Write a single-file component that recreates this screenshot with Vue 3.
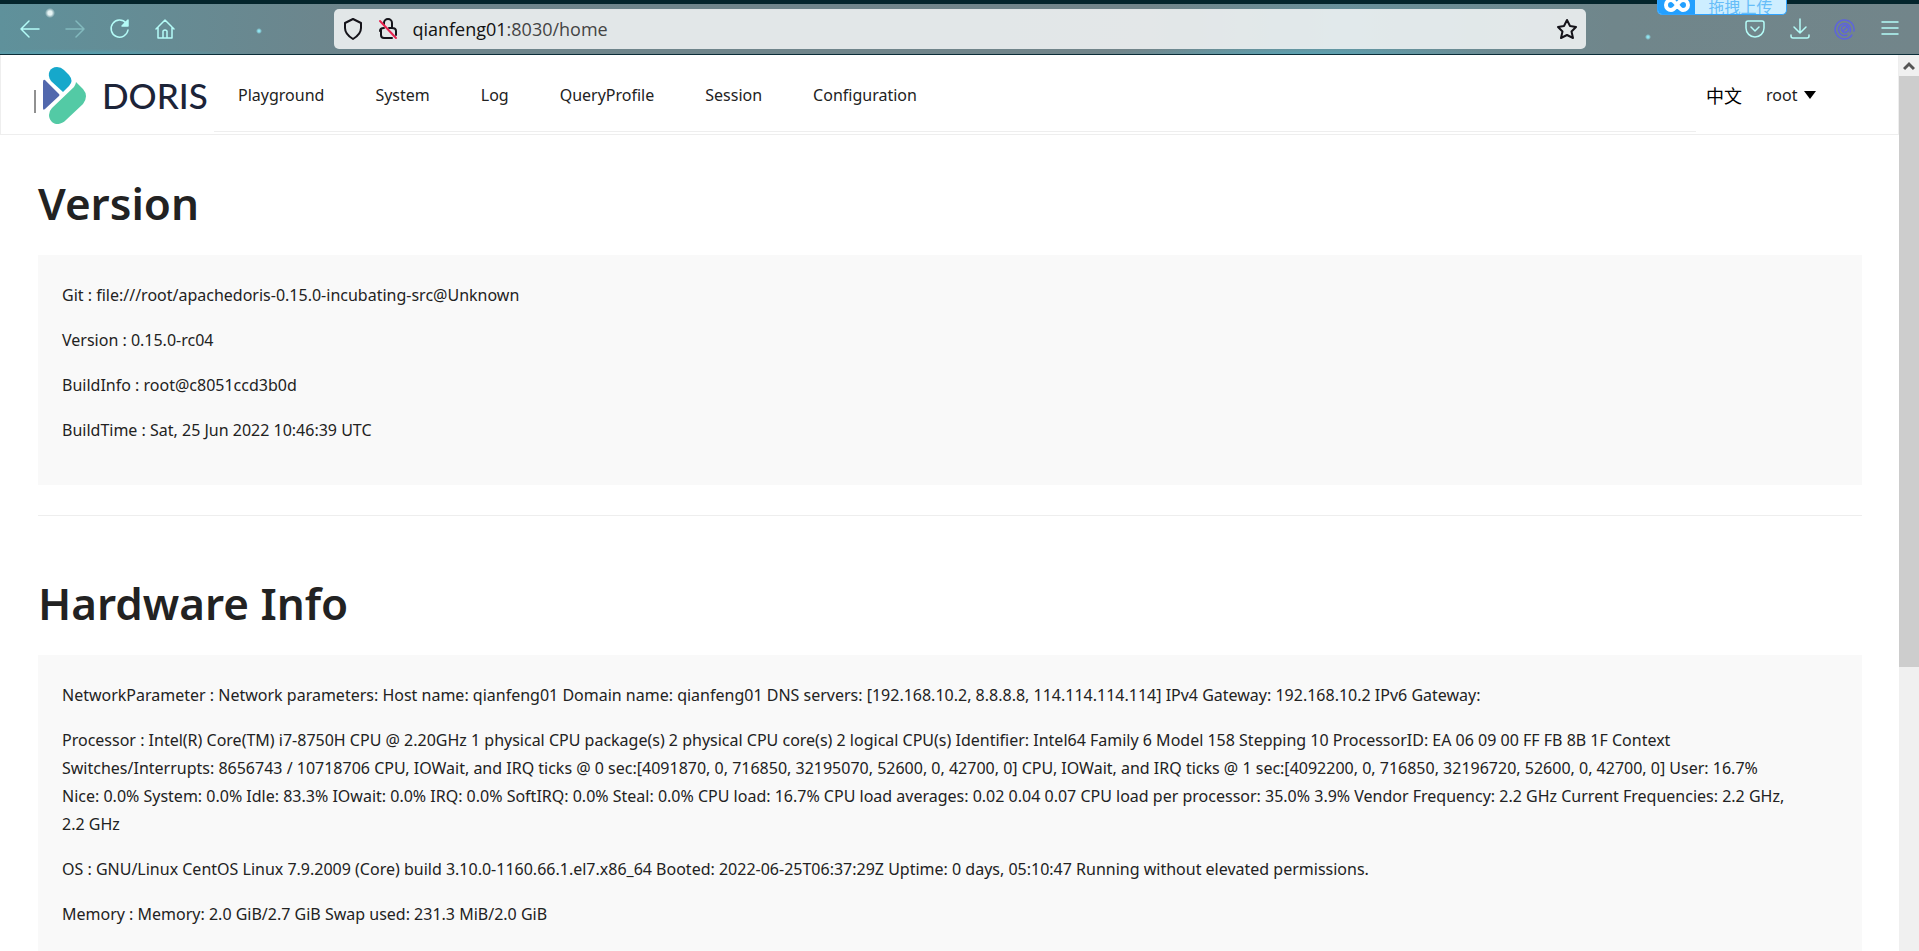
<template>
  <div class="screen">
    <header class="browser">
      <div class="tools">
        <button aria-label="Back"><svg width="22" height="22" viewBox="0 0 22 22"><path d="M20 11H2M10 3l-8 8 8 8" /></svg></button>
        <button aria-label="Forward" disabled><svg width="22" height="22" viewBox="0 0 22 22"><path d="M2 11h18M12 3l8 8-8 8" /></svg></button>
        <button aria-label="Reload"><svg width="22" height="22" viewBox="0 0 22 22"><path d="M17 5a8.500 8.500 0 1 0 2 7" /><path d="M19 2v6h-6z" class="fill" /></svg></button>
        <button aria-label="Home"><svg width="22" height="22" viewBox="0 0 22 22"><path d="M2 11l9-9 9 9M4 9v11h14V9M9 20v-7q2-2 4 0v7" /></svg></button>
      </div>
      <div class="urlbar">
        <svg width="22" height="22" viewBox="0 0 22 22"><path d="M11 1l8 4v5c0 5-3 8-8 11-5-3-8-6-8-11V5z" /></svg>
        <svg width="22" height="22" viewBox="0 0 22 22"><path d="M7 7V5a4 4 0 0 1 8 0v5q4 0 4 3v4M12 10h3M4 12v5q0 3 3 3h8M3 13q0-3 4-3" /><path d="M3 3l16 17" class="slash" /></svg>
        <p class="address"><b>qianfeng01</b>:8030/home</p>
        <button aria-label="Bookmark"><svg width="22" height="22" viewBox="0 0 22 22"><path d="M11 2l3 6 6 1-4.500 4.500L17 20l-6-3-6 3 1.500-6.500L2 9l6-1z" /></svg></button>
      </div>
      <div class="tools right">
        <button aria-label="Pocket"><svg width="22" height="22" viewBox="0 0 22 22"><path d="M4 3h14q2 0 2 2v5a9 9 0 0 1-18 0V5q0-2 2-2zM7 9l4 4 4-4" /></svg></button>
        <button aria-label="Downloads"><svg width="22" height="22" viewBox="0 0 22 22"><path d="M11 1v14M5 9l6 6 6-6M2 17v1q0 2 2 2h14q2 0 2-2v-1" /></svg></button>
        <button aria-label="Extension" class="ext"><svg width="22" height="22" viewBox="0 0 22 22"><path d="M17 18.500A9.500 9.500 0 1 1 20 13M13 17a6 6 0 1 1 3-3" /><circle cx="11" cy="11" r="3.500" /><path d="M9 13l4-4M16 19l2-2" /></svg></button>
        <button aria-label="Menu"><svg width="22" height="22" viewBox="0 0 22 22"><path d="M3 4h16M3 10h16M3 16h16" /></svg></button>
      </div>
      <button class="upload">
        <span class="cloud"><svg width="26" height="18" viewBox="0 0 26 18"><path d="M13 7C10 3 9 2 7 2a5 5 0 0 0 0 10c3 0 4-2 6-5s3-5 6-5a5 5 0 0 1 0 10c-2 0-3-1-6-5" /></svg></span>
        <span class="label">拖拽上传</span>
      </button>
    </header>
    <div class="viewport">
      <div class="page">
        <nav class="navbar">
          <a class="logo" href="#" aria-label="Doris">
            <svg width="54" height="58" viewBox="0 0 54 58">
              <path d="M1 24v23" stroke="#222" />
              <path d="M9 16v26q0 3 2 1l14-13q1-1 0-2L11 14q-2-1-2 2z" fill="#5268ad" />
              <path d="M29 26L17 15C12 8 16 1 23 1q4 0 7 3l5 5q5 6 0 11z" fill="#16a8cb" />
              <path d="M42 16l7 7q6 7 0 15L32 54C24 62 15 57 15 49q0-4 3-7l22-21q2-3 2-5z" fill="#53caa5" />
            </svg>
            <span>DORIS</span>
          </a>
          <div class="menu">
            <a v-for="item in menu" :key="item" href="#">{{ item }}</a>
          </div>
          <div class="user">
            <button class="lang">中文</button>
            <button>root <svg width="12" height="8" viewBox="0 0 12 8"><path d="M0 0h12L6 8z" /></svg></button>
          </div>
        </nav>
        <main>
          <section v-for="section in sections" :key="section.title">
            <h1>{{ section.title }}</h1>
            <div class="card">
              <p v-for="row in section.rows" :key="row">{{ row }}</p>
            </div>
            <hr />
          </section>
        </main>
      </div>
      <div class="scrollbar">
        <button aria-label="Scroll up"><svg width="12" height="10" viewBox="0 0 12 10"><path d="M1 8l5-5 5 5" /></svg></button>
        <div class="thumb"></div>
      </div>
    </div>
  </div>
</template>

<script setup>
const menu = ['Playground', 'System', 'Log', 'QueryProfile', 'Session', 'Configuration'];

const processor = [
  'Processor : Intel(R) Core(TM) i7-8750H CPU @ 2.20GHz 1 physical CPU package(s) 2 physical CPU core(s) 2 logical CPU(s) Identifier: Intel64 Family 6 Model 158 Stepping 10 ProcessorID: EA 06 09 00 FF FB 8B 1F Context',
  'Switches/Interrupts: 8656743 / 10718706 CPU, IOWait, and IRQ ticks @ 0 sec:[4091870, 0, 716850, 32195070, 52600, 0, 42700, 0] CPU, IOWait, and IRQ ticks @ 1 sec:[4092200, 0, 716850, 32196720, 52600, 0, 42700, 0] User: 16.7%',
  'Nice: 0.0% System: 0.0% Idle: 83.3% IOwait: 0.0% IRQ: 0.0% SoftIRQ: 0.0% Steal: 0.0% CPU load: 16.7% CPU load averages: 0.02 0.04 0.07 CPU load per processor: 35.0% 3.9% Vendor Frequency: 2.2 GHz Current Frequencies: 2.2 GHz,',
  '2.2 GHz',
].join('\n');

const sections = [
  {
    title: 'Version',
    rows: [
      'Git : file:///root/apachedoris-0.15.0-incubating-src@Unknown',
      'Version : 0.15.0-rc04',
      'BuildInfo : root@c8051ccd3b0d',
      'BuildTime : Sat, 25 Jun 2022 10:46:39 UTC',
    ],
  },
  {
    title: 'Hardware Info',
    rows: [
      'NetworkParameter : Network parameters: Host name: qianfeng01 Domain name: qianfeng01 DNS servers: [192.168.10.2, 8.8.8.8, 114.114.114.114] IPv4 Gateway: 192.168.10.2 IPv6 Gateway:',
      processor,
      'OS : GNU/Linux CentOS Linux 7.9.2009 (Core) build 3.10.0-1160.66.1.el7.x86_64 Booted: 2022-06-25T06:37:29Z Uptime: 0 days, 05:10:47 Running without elevated permissions.',
      'Memory : Memory: 2.0 GiB/2.7 GiB Swap used: 231.3 MiB/2.0 GiB',
      'FileSystem : File System: File Descriptors: 2208/274073 / (Local Disk) [xfs] 25.1 GiB of 36.9 GiB free (68.0%), 19.2 M of 19.3 M files free (99.6%) is /dev/mapper/centos-root [/dev/dm-0] and is mounted at / /boot (Local Disk) [xfs]',
    ],
  },
];
</script>

<style>
body {
  overflow: hidden;
}
</style>

<style scoped>
.screen {
  display: flex;
  flex-direction: column;
  height: 100vh;
  font-family: 'Noto Sans', 'Noto Sans CJK SC', sans-serif;
  font-size: 16px;
  color: #222;
  background: #fff;
}

button {
  display: flex;
  align-items: center;
  padding: 0;
  border: 0;
  background: none;
  font: inherit;
  color: inherit;
}

a {
  color: inherit;
  text-decoration: none;
}

.browser {
  position: relative;
  display: flex;
  align-items: center;
  height: 50px;
  border-top: 4px solid #04252c;
  border-bottom: 1px solid #0b2d38;
  background:
    radial-gradient(circle at 50px 9px, #e6f4f4 0 2px, transparent 5px),
    radial-gradient(circle at 259px 27px, #8fe3ef 0 1px, transparent 3px),
    radial-gradient(circle at 1648px 33px, #8fe3ef 0 1px, transparent 3px),
    radial-gradient(ellipse at 80px 50px, rgba(82, 176, 196, 0.6), transparent 180px),
    radial-gradient(ellipse at 1300px 50px, rgba(82, 176, 196, 0.6), transparent 200px),
    linear-gradient(90deg, #5f919b, #6d858c 18%, #72858a 60%, #68909a 70%, #70868b 84%, #72858a);
}

.browser svg {
  fill: none;
  stroke: currentColor;
  stroke-width: 2;
  stroke-linecap: round;
  stroke-linejoin: round;
}

.browser svg .fill {
  fill: currentColor;
}

.browser svg .slash {
  stroke: #e8234f;
}

.tools {
  display: flex;
  flex: 1;
  gap: 23px;
  padding-left: 19px;
  color: #b4fbf7;
}

.browser .tools svg {
  stroke-width: 1.5;
}

.tools button:disabled {
  opacity: 0.4;
}

.tools.right {
  justify-content: flex-end;
  padding: 0 18px 0 0;
}

.tools .ext {
  color: #5d63dd;
}

.urlbar {
  display: flex;
  align-items: center;
  gap: 13px;
  width: 65.2%;
  height: 40px;
  padding: 0 8px;
  box-sizing: border-box;
  border-radius: 5px;
  background: rgba(255, 255, 255, 0.8);
  color: #15141a;
}

.address {
  flex: 1;
  margin: 0;
  font-family: 'Open Sans', sans-serif;
  font-size: 18px;
  color: #444;
}

.address b {
  font-weight: 400;
  color: #111;
}

.upload {
  position: absolute;
  top: -4px;
  right: 132px;
  height: 15px;
  overflow: hidden;
  border: 1px solid #31a4ff;
  border-top: 0;
  border-radius: 0 0 5px 5px;
  background: #cdeeff;
}

.cloud {
  display: flex;
  justify-content: center;
  width: 37px;
  background: #23a0ff;
  color: #fff;
}

.upload .cloud svg {
  stroke-width: 4;
}

.upload .label {
  width: 91px;
  line-height: 15px;
  color: #67bdf8;
}

.viewport {
  display: flex;
  flex: 1;
  min-height: 0;
}

.page {
  flex: 1;
  overflow: hidden;
}

.navbar {
  display: flex;
  height: 79px;
  border: 1px solid #eee;
  border-top: 0;
}

.logo {
  display: flex;
  align-items: center;
  gap: 14px;
  width: 180px;
  padding-left: 33px;
  font-family: Lato, sans-serif;
  font-size: 35px;
  font-weight: 500;
  color: #1c2438;
}

.menu {
  display: flex;
  flex: 1;
  align-items: center;
  gap: 51px;
  height: 72px;
  padding: 4px 0 0 24px;
  border-bottom: 1px solid #eee;
}

.user {
  display: flex;
  align-items: center;
  gap: 24px;
  width: 192px;
  padding-left: 10px;
}

.user button {
  gap: 7px;
}

.user .lang {
  font-size: 18px;
  color: #000;
}

main {
  padding: 0 37px 0 38px;
}

h1 {
  margin: 0;
  padding: 35px 0 19px;
  font-size: 44px;
  font-weight: 600;
  line-height: 66px;
}

.card {
  padding: 26px 24px 24px;
  background: #f9f9f9;
}

.card p {
  margin: 0 0 17px;
  line-height: 28px;
  white-space: pre-line;
}

hr {
  height: 1px;
  margin: 30px 0 19px;
  border: 0;
  background: #eee;
}

.scrollbar {
  width: 20px;
  background: #f0f0f0;
}

.scrollbar button {
  justify-content: center;
  width: 20px;
  height: 21px;
}

.scrollbar svg {
  fill: none;
  stroke: #555;
  stroke-width: 3;
}

.thumb {
  height: 66%;
  background: #cdcdcd;
}
</style>
